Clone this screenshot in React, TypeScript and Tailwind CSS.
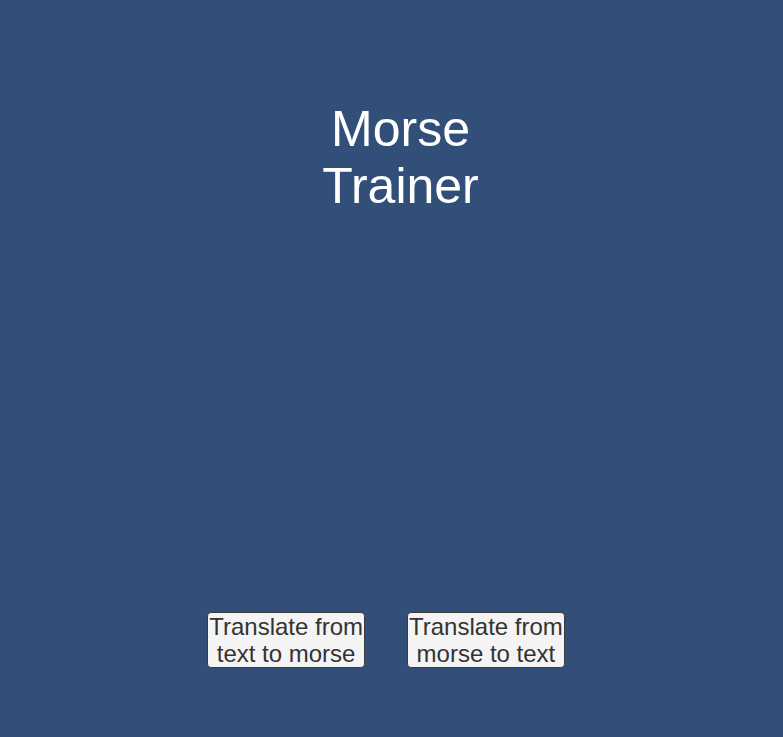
export default function App() {
  return (
    <div className="flex h-[737px] flex-col items-center bg-[#314f79] font-['Liberation_Sans',Arial,sans-serif]">
      {/* Title */}
      <h1 className="mt-[101px] ml-[18px] text-center text-[50px] leading-[57px] text-white">
        Morse
        <br />
        Trainer
      </h1>

      {/* Mode buttons */}
      <div className="mt-auto mr-[11px] mb-[69px] flex gap-[42px]">
        <button className="rounded-[4px] border border-[#3a3a3a] bg-[#f4f4f4] px-px text-[24px] leading-[27px] text-[#333]">
          Translate from
          <br />
          text to morse
        </button>
        <button className="rounded-[4px] border border-[#3a3a3a] bg-[#f4f4f4] px-px text-[24px] leading-[27px] text-[#333]">
          Translate from
          <br />
          morse to text
        </button>
      </div>
    </div>
  );
}
